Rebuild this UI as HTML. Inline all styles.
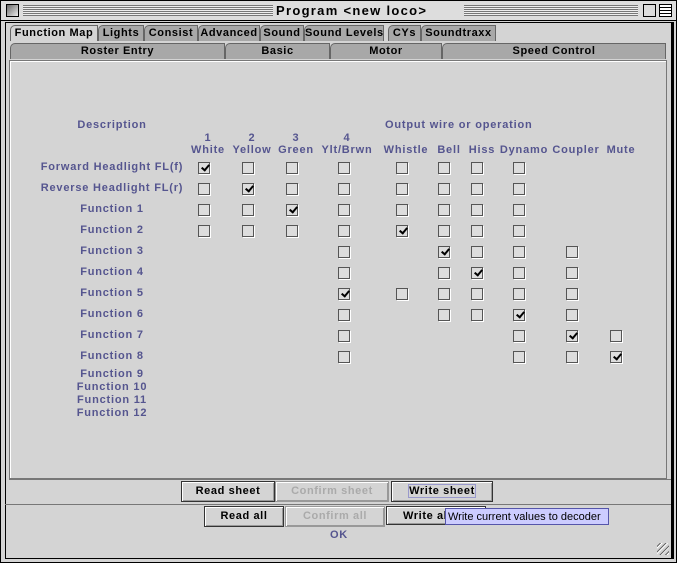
<!DOCTYPE html><html><head><style>
body{margin:0;width:677px;height:563px;overflow:hidden;background:#fff;font-family:"Liberation Sans",sans-serif}
.win{position:absolute;left:0;top:0;width:675px;height:561px;border:1px solid #000;background:#d4d4d4}
.abs{position:absolute}
.title{left:0;top:0;width:675px;height:19px;background:#ddd;border-bottom:1px solid #000}
.stripes{position:absolute;top:4px;height:11px;background:repeating-linear-gradient(#777 0 1px,#eee 1px 2px)}
.tab{position:absolute;height:15px;background:#a8a8a8;border:1px solid #666;border-bottom:none;border-top-left-radius:5px;font:bold 11px "Liberation Sans",sans-serif;text-align:center;line-height:15px;color:#000;letter-spacing:.6px;white-space:nowrap;overflow:hidden}
.lbl{position:absolute;font:bold 11px "Liberation Sans",sans-serif;color:#55558f;letter-spacing:.8px;white-space:nowrap}
.c{transform:translateX(-50%);text-align:center}
.cb{position:absolute;width:10px;height:10px;background:#ddd;border:1px solid #555;box-shadow:1px 1px 0 #fff}
.cb.k::after{content:"";position:absolute;width:3px;height:6px;border:solid #000;border-width:0 2px 2px 0;transform:rotate(40deg);left:4px;top:0}
.btn{position:absolute;height:19px;border:1px solid #333;background:#d4d4d4;box-shadow:inset 1px 1px 0 #fff,inset -1px -1px 0 #999;font:bold 11px "Liberation Sans",sans-serif;text-align:center;line-height:19px;letter-spacing:.6px;white-space:nowrap;overflow:hidden}
.dis{color:#aaa;border-color:#999}
</style></head><body><div class="win">
<div class="abs title">
<div class="abs" style="left:5px;top:3px;width:11px;height:11px;border:1px solid #000;background:linear-gradient(135deg,#666,#eee)"></div>
<div class="stripes" style="left:22px;width:250px"></div>
<div class="abs" style="left:275px;top:2px;font:bold 13px 'Liberation Sans',sans-serif;letter-spacing:1.3px;white-space:nowrap">Program &lt;new loco&gt;</div>
<div class="stripes" style="left:405px;width:232px;left:463px;width:174px"></div>
<div class="abs" style="left:642px;top:3px;width:11px;height:11px;border:1px solid #000"></div>
<div class="abs" style="left:658px;top:3px;width:11px;height:11px;border:1px solid #000;background:repeating-linear-gradient(#fff 0 2px,#000 2px 3px)"></div>
</div>
<div class="abs" style="left:4px;top:21px;width:665px;height:535px;border:1px solid #000;border-right:3px solid #000"></div>
<div class="tab" style="left:9px;top:24px;width:86px;background:#d4d4d4">Function Map</div>
<div class="tab" style="left:97px;top:24px;width:44px">Lights</div>
<div class="tab" style="left:143px;top:24px;width:52px">Consist</div>
<div class="tab" style="left:197px;top:24px;width:60px">Advanced</div>
<div class="tab" style="left:259px;top:24px;width:42px">Sound</div>
<div class="tab" style="left:303px;top:24px;width:78px">Sound Levels</div>
<div class="tab" style="left:387px;top:24px;width:31px">CYs</div>
<div class="tab" style="left:420px;top:24px;width:73px">Soundtraxx</div>
<div class="tab" style="left:9px;top:42px;width:213px">Roster Entry</div>
<div class="tab" style="left:224px;top:42px;width:103px">Basic</div>
<div class="tab" style="left:329px;top:42px;width:110px">Motor</div>
<div class="tab" style="left:441px;top:42px;width:222px">Speed Control</div>
<div class="abs" style="left:8px;top:59px;width:656px;height:417px;border:1px solid #777;box-shadow:inset 1px 1px 0 #fff"></div>
<div class="lbl c" style="left:111px;top:118px">Description</div>
<div class="lbl" style="left:384px;top:118px">Output wire or operation</div>
<div class="lbl c" style="left:207px;top:131px">1<br>White</div>
<div class="lbl c" style="left:251px;top:131px">2<br>Yellow</div>
<div class="lbl c" style="left:295px;top:131px">3<br>Green</div>
<div class="lbl c" style="left:346px;top:131px">4<br>Ylt/Brwn</div>
<div class="lbl c" style="left:405px;top:131px"><br>Whistle</div>
<div class="lbl c" style="left:448px;top:131px"><br>Bell</div>
<div class="lbl c" style="left:481px;top:131px"><br>Hiss</div>
<div class="lbl c" style="left:523px;top:131px"><br>Dynamo</div>
<div class="lbl c" style="left:575px;top:131px"><br>Coupler</div>
<div class="lbl c" style="left:620px;top:131px"><br>Mute</div>
<div id="rows"></div>
<div class="abs" style="left:8px;top:478px;width:662px;border-top:1px solid #777"></div>
<div class="btn" style="left:180px;top:480px;width:92px">Read sheet</div>
<div class="btn dis" style="left:274px;top:480px;width:112px">Confirm sheet</div>
<div class="btn" style="left:390px;top:480px;width:100px"><span style="border:1px solid #99c">Write sheet</span></div>
<div class="abs" style="left:4px;top:503px;width:666px;border-top:1px solid #777"></div>
<div class="btn" style="left:203px;top:505px;width:78px">Read all</div>
<div class="btn dis" style="left:284px;top:505px;width:98px">Confirm all</div>
<div class="btn" style="left:385px;top:505px;width:100px;text-align:left;padding-left:16px;box-sizing:border-box">Write all</div>
<div class="abs" style="left:444px;top:507px;height:17px;background:#ccf;border:1px solid #55a;font:11px 'Liberation Sans',sans-serif;line-height:17px;padding-left:2px;box-sizing:border-box;width:164px;white-space:nowrap">Write current values to decoder</div>
<div class="lbl c" style="left:338px;top:528px">OK</div>
<div class="abs" style="left:656px;top:542px;width:12px;height:12px;background:repeating-linear-gradient(135deg,transparent 0 2px,#666 2px 3px,#fff 3px 4px)"></div>
</div>
<script>
var cols=[203,247,291,343,401,443,476,518,571,615];
var rows=[["Forward Headlight FL(f)","1k,2,3,4,5,6,7,8"],["Reverse Headlight FL(r)","1,2k,3,4,5,6,7,8"],["Function 1","1,2,3k,4,5,6,7,8"],["Function 2","1,2,3,4,5k,6,7,8"],["Function 3","4,6k,7,8,9"],["Function 4","4,6,7k,8,9"],["Function 5","4k,5,6,7,8,9"],["Function 6","4,6,7,8k,9"],["Function 7","4,8,9k,10"],["Function 8","4,8,9,10k"]];
var h="";
rows.forEach(function(r,i){var y=167+21*i;h+='<div class="lbl c" style="left:111px;top:'+(y-7)+'px">'+r[0]+'</div>';
r[1].split(",").forEach(function(s){var n=parseInt(s)-1,k=s.indexOf("k")>0;h+='<div class="cb'+(k?' k':'')+'" style="left:'+(cols[n]-6)+'px;top:'+(y-6)+'px"></div>';});});
["Function 9","Function 10","Function 11","Function 12"].forEach(function(t,i){h+='<div class="lbl c" style="left:111px;top:'+(367+13*i)+'px">'+t+'</div>';});
document.getElementById("rows").innerHTML=h;
</script>
</body></html>
